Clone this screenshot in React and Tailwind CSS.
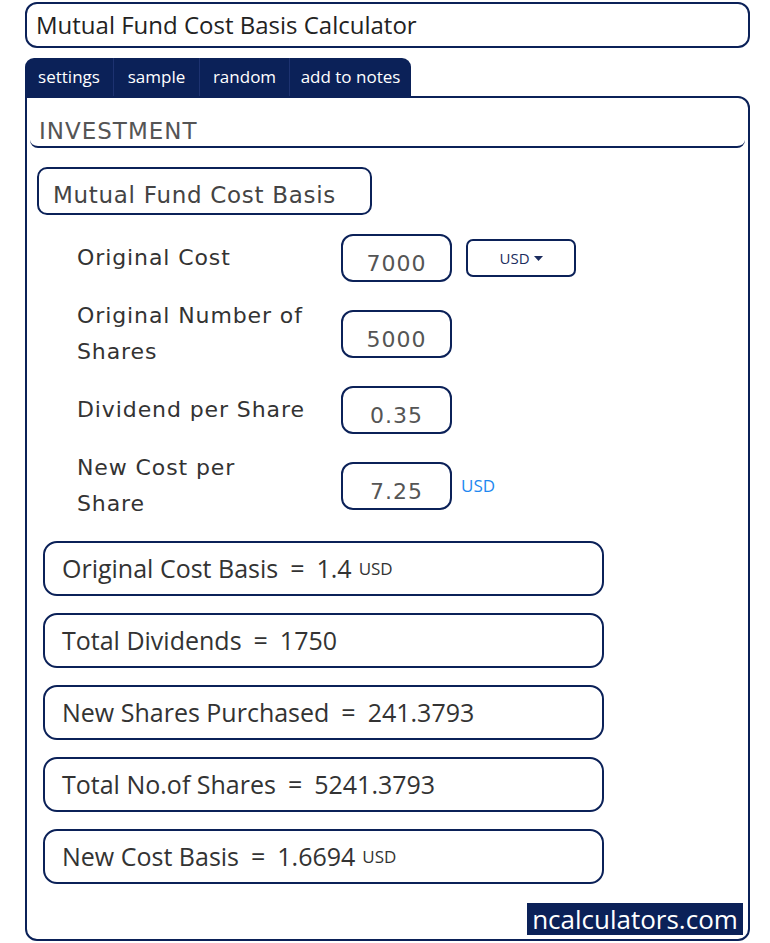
import React from "react";

const NAVY = "border-[#0b2158]";
const WIDE = { fontFamily: "'DejaVu Sans', 'Liberation Sans', sans-serif" };

function InputRow({ label, value, extra }) {
  return (
    <div className="flex h-[76px] items-center">
      <div className="w-[304px] pl-[40px] text-[22px] leading-[36px] tracking-[0.9px] text-[#333]" style={WIDE}>
        {label}
      </div>
      <div
        className={`flex h-[48px] w-[111px] items-end justify-center rounded-[12px] border-2 ${NAVY} text-[22px] tracking-[1px] text-[#555]`}
        style={WIDE}
      >
        {value}
      </div>
      {extra}
    </div>
  );
}

function Result({ label, value, unit }) {
  return (
    <div className={`flex h-[55px] w-[561px] items-center rounded-[14px] border-2 ${NAVY} pl-[17px] text-[25px] text-[#333]`}>
      <span>{label}</span>
      <span className="mx-[12px]">=</span>
      <span>{value}</span>
      {unit && <span className="ml-[7px] text-[17px]">{unit}</span>}
    </div>
  );
}

export default function App() {
  return (
    <div
      className="h-[943px] w-[770px] bg-white pl-[25px] pr-[20px] pt-[2px]"
      style={{ fontFamily: "'Open Sans', 'Liberation Sans', sans-serif" }}
    >
      <div className={`flex h-[46px] items-center rounded-[12px] border-2 ${NAVY} pl-[9px] text-[24px] text-[#222]`}>
        Mutual Fund Cost Basis Calculator
      </div>

      <div className="mt-[10px] flex h-[38px] w-[386px] items-center rounded-t-[9px] bg-[#0b2158] text-[17px] text-white">
        <span className="w-[88px] text-center">settings</span>
        <span className="h-full w-px bg-[#1d3270]" />
        <span className="w-[85px] text-center">sample</span>
        <span className="h-full w-px bg-[#1d3270]" />
        <span className="w-[89px] text-center">random</span>
        <span className="h-full w-px bg-[#1d3270]" />
        <span className="w-[121px] text-center">add to notes</span>
      </div>

      <div className={`flex h-[845px] flex-col rounded-b-[12px] rounded-tr-[12px] border-2 ${NAVY} px-[3px]`}>
        <div
          className={`mt-[19px] rounded-b-[8px] border-b-2 ${NAVY} pb-[1px] pl-[9px] text-[23px] leading-[28px] tracking-[1px] text-[#555]`}
          style={WIDE}
        >
          INVESTMENT
        </div>

        <div className="pl-[7px]">
          <div
            className={`mt-[19px] flex h-[48px] w-[335px] items-end rounded-[10px] border-2 ${NAVY} pb-[1px] pl-[14px] text-[23px] tracking-[0.7px] text-[#444]`}
            style={WIDE}
          >
            Mutual Fund Cost Basis
          </div>

          <div className="mt-[5px] flex flex-col">
            <InputRow
              label="Original Cost"
              value="7000"
              extra={
                <div
                  className={`ml-[14px] flex h-[38px] w-[110px] items-center justify-center gap-[4px] rounded-[7px] border-2 ${NAVY} text-[15px] text-[#1b2c5e]`}
                >
                  USD
                  <svg width="9" height="5" viewBox="0 0 9 5">
                    <path d="M0 0h9L4.5 5z" fill="#1b2c5e" />
                  </svg>
                </div>
              }
            />
            <InputRow label={<>Original Number of<br />Shares</>} value="5000" />
            <InputRow label="Dividend per Share" value="0.35" />
            <InputRow
              label={<>New Cost per<br />Share</>}
              value="7.25"
              extra={<span className="ml-[9px] -mt-[1px] text-[17px] text-[#1e88f0]">USD</span>}
            />
          </div>

          <div className="mt-[17px] flex flex-col gap-[17px] pl-[6px]">
            <Result label="Original Cost Basis" value="1.4" unit="USD" />
            <Result label="Total Dividends" value="1750" />
            <Result label="New Shares Purchased" value="241.3793" />
            <Result label="Total No.of Shares" value="5241.3793" />
            <Result label="New Cost Basis" value="1.6694" unit="USD" />
          </div>
        </div>

        <div className="mt-auto mb-[4px] mr-[2px] flex justify-end">
          <div className="flex h-[32px] w-[216px] items-center justify-center bg-[#0b2158] text-[26px] text-white">
            ncalculators.com
          </div>
        </div>
      </div>
    </div>
  );
}
